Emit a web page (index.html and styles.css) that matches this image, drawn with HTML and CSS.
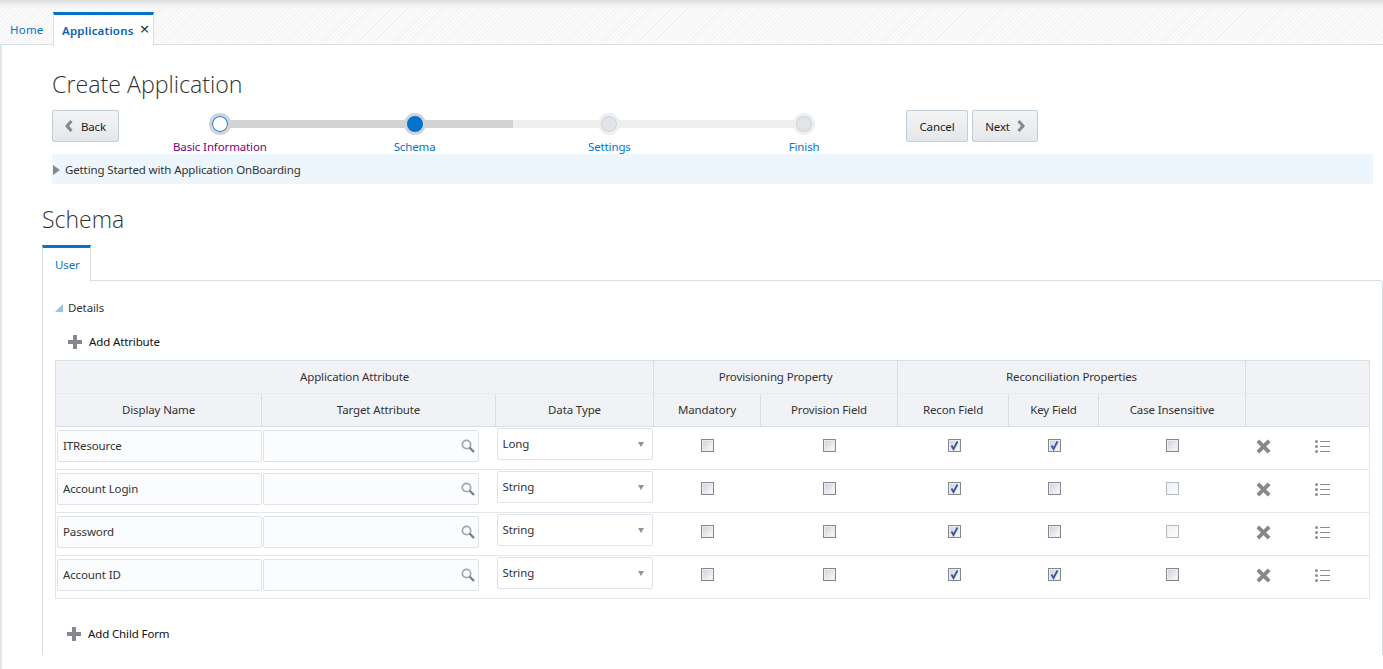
FILE: index.html
```html
<!DOCTYPE html>
<html lang="en">
<head>
<meta charset="utf-8">
<title>Create Application</title>
<link rel="stylesheet" href="styles.css">
</head>
<body>
<svg class="defs" width="0" height="0" aria-hidden="true">
  <symbol id="plus" viewBox="0 0 14 14"><path d="M5 0h4v5h5v4H9v5H5V9H0V5h5z"/></symbol>
  <symbol id="lens" viewBox="0 0 14 14"><circle cx="5.500" cy="5.500" r="4.200" fill="none" stroke="#a4a8ac" stroke-width="1.700"/><path d="M8.500 8.500l4.500 4.500" stroke="#7d8185" stroke-width="2.400"/></symbol>
  <symbol id="del" viewBox="0 0 15 15"><path d="M3.200.5L7.500 4.800 11.800.5l2.700 2.700-4.300 4.300 4.300 4.300-2.700 2.700-4.300-4.300-4.300 4.300L.5 11.800l4.300-4.300L.5 3.200z"/></symbol>
  <symbol id="list" viewBox="0 0 15 13"><g fill="#8b8f93"><circle cx="1.500" cy="1.500" r="1.500"/><circle cx="1.500" cy="6.500" r="1.500"/><circle cx="1.500" cy="11.500" r="1.500"/><rect x="5" y="1" width="10" height="1"/><rect x="5" y="6" width="10" height="1"/><rect x="5" y="11" width="10" height="1"/></g></symbol>
  <symbol id="chev" viewBox="0 0 8 12"><path d="M6.500 1L2 6l4.500 5" fill="none" stroke="#85898d" stroke-width="3"/></symbol>
  <symbol id="tick" viewBox="0 0 13 13"><path d="M3.500 6.500l2 3.500L9.500 2.500" fill="none" stroke="#3c56a5" stroke-width="1.900"/></symbol>
</svg>

<header class="topbar">
  <nav class="tabs">
    <a class="tab">Home</a>
    <a class="tab tab-active">Applications <span class="tab-close">×</span></a>
  </nav>
</header>

<main class="page">
  <section class="wizard">
    <h1 class="title">Create Application</h1>
    <div class="train-row">
      <button class="btn btn-back"><svg class="chev"><use href="#chev"/></svg>Back</button>
      <ol class="train">
        <li class="stop stop-visited"><span class="dot"></span><span class="stop-label">Basic Information</span></li>
        <li class="stop stop-current"><span class="dot"></span><span class="stop-label">Schema</span></li>
        <li class="stop"><span class="dot"></span><span class="stop-label">Settings</span></li>
        <li class="stop stop-last"><span class="dot"></span><span class="stop-label">Finish</span></li>
      </ol>
      <div class="train-actions">
        <button class="btn btn-cancel">Cancel</button>
        <button class="btn btn-next">Next<svg class="chev chev-next"><use href="#chev"/></svg></button>
      </div>
    </div>
    <div class="banner"><span class="tri-right"></span>Getting Started with Application OnBoarding</div>
  </section>

  <section class="schema">
    <h2 class="title schema-title">Schema</h2>
    <div class="subtabs"><a class="subtab">User</a></div>
    <div class="panel">
      <div class="details"><span class="tri-open"></span>Details</div>
      <div class="action action-attr"><svg class="plus"><use href="#plus"/></svg>Add Attribute</div>
      <table class="grid">
        <colgroup>
          <col class="c1"><col class="c2"><col class="c3"><col class="c4"><col class="c5"><col class="c6"><col class="c7"><col class="c8"><col class="c9"><col class="c10">
        </colgroup>
        <thead>
          <tr>
            <th colspan="3">Application Attribute</th>
            <th colspan="2">Provisioning Property</th>
            <th colspan="3">Reconciliation Properties</th>
            <th colspan="2"></th>
          </tr>
          <tr>
            <th>Display Name</th><th>Target Attribute</th><th>Data Type</th>
            <th>Mandatory</th><th>Provision Field</th>
            <th>Recon Field</th><th>Key Field</th><th>Case Insensitive</th>
            <th colspan="2"></th>
          </tr>
        </thead>
        <tbody>
          <tr>
            <td><div class="field">ITResource</div></td>
            <td><div class="field field-search"><svg class="lens"><use href="#lens"/></svg></div></td>
            <td class="td-type"><div class="select">Long<span class="caret"></span></div></td>
            <td><span class="cb"></span></td><td><span class="cb"></span></td>
            <td class="td-recon"><span class="cb"><svg><use href="#tick"/></svg></span></td>
            <td class="td-recon"><span class="cb"><svg><use href="#tick"/></svg></span></td>
            <td><span class="cb"></span></td>
            <td><svg class="del"><use href="#del"/></svg></td>
            <td><svg class="list"><use href="#list"/></svg></td>
          </tr>
          <tr>
            <td><div class="field">Account Login</div></td>
            <td><div class="field field-search"><svg class="lens"><use href="#lens"/></svg></div></td>
            <td class="td-type"><div class="select">String<span class="caret"></span></div></td>
            <td><span class="cb"></span></td><td><span class="cb"></span></td>
            <td class="td-recon"><span class="cb"><svg><use href="#tick"/></svg></span></td>
            <td class="td-recon"><span class="cb"></span></td>
            <td><span class="cb cb-off"></span></td>
            <td><svg class="del"><use href="#del"/></svg></td>
            <td><svg class="list"><use href="#list"/></svg></td>
          </tr>
          <tr>
            <td><div class="field">Password</div></td>
            <td><div class="field field-search"><svg class="lens"><use href="#lens"/></svg></div></td>
            <td class="td-type"><div class="select">String<span class="caret"></span></div></td>
            <td><span class="cb"></span></td><td><span class="cb"></span></td>
            <td class="td-recon"><span class="cb"><svg><use href="#tick"/></svg></span></td>
            <td class="td-recon"><span class="cb"></span></td>
            <td><span class="cb cb-off"></span></td>
            <td><svg class="del"><use href="#del"/></svg></td>
            <td><svg class="list"><use href="#list"/></svg></td>
          </tr>
          <tr>
            <td><div class="field">Account ID</div></td>
            <td><div class="field field-search"><svg class="lens"><use href="#lens"/></svg></div></td>
            <td class="td-type"><div class="select">String<span class="caret"></span></div></td>
            <td><span class="cb"></span></td><td><span class="cb"></span></td>
            <td class="td-recon"><span class="cb"><svg><use href="#tick"/></svg></span></td>
            <td class="td-recon"><span class="cb"><svg><use href="#tick"/></svg></span></td>
            <td><span class="cb"></span></td>
            <td><svg class="del"><use href="#del"/></svg></td>
            <td><svg class="list"><use href="#list"/></svg></td>
          </tr>
        </tbody>
      </table>
      <div class="action action-child"><svg class="plus"><use href="#plus"/></svg>Add Child Form</div>
    </div>
  </section>
</main>
</body>
</html>
```

FILE: styles.css
```css
* { box-sizing: border-box; }
html, body { height: 100%; }
body {
  margin: 0;
  height: 669px;
  overflow: hidden;
  background: #fff;
  color: #333;
  font: 11.5px/16px "Noto Sans", "Open Sans", "Liberation Sans", sans-serif;
  letter-spacing: -0.13px;
}
.defs { display: block; height: 0; }

.topbar {
  height: 45px;
  border-bottom: 1px solid #d6dfe6;
  background:
    linear-gradient(#dcdcdc, #f1f1f1 5px, rgba(255,255,255,0) 9px),
    repeating-linear-gradient(135deg, #f3f3f3 0 1px, #fbfbfb 1px 3px);
}
.tabs { display: flex; padding-top: 12px; height: 45px; align-items: stretch; }
.tab { width: 53px; padding: 10px 0 0 10px; color: #0572ce; letter-spacing: 0.2px; }
.tab-active {
  width: 101px;
  margin: 0 0 -1px 0;
  padding: 7px 0 0 8px;
  background: #fff;
  border: 1px solid #d6dfe6;
  border-top: 3px solid #0572ce;
  border-bottom: 0;
  font-weight: 600;
  color: #0a62b4;
  white-space: nowrap;
}
.tab-close { color: #333; font-weight: 400; font-size: 17px; line-height: 14px; margin-left: 3px; }

.page { height: 624px; border-left: 2px solid #e3e6ea; }

.wizard { padding: 22px 10px 0 50px; }
.title {
  margin: 0;
  font: 300 23.200px/34px "Open Sans", "Noto Sans", sans-serif;
  letter-spacing: 0;
  color: #333;
}
.train-row { display: flex; height: 44px; margin-top: 9px; }
.btn {
  height: 32px;
  padding: 2px 0 0;
  display: inline-flex;
  align-items: center;
  justify-content: center;
  border: 1px solid #c4ced7;
  border-radius: 2px;
  background: linear-gradient(#f3f4f5, #e4e7ea);
  color: #1c1c1c;
  font: inherit;
  letter-spacing: inherit;
}
.btn-back { width: 67px; }
.btn-cancel { width: 62px; }
.btn-next { width: 66px; }
.chev { width: 8px; height: 12px; margin: -2px 8px 0 0; }
.chev-next { margin: -2px 0 0 7px; transform: scaleX(-1); }

.train {
  display: grid;
  grid-template-columns: repeat(4, 194.750px);
  margin: 0 0 0 3.500px;
  padding: 0;
  list-style: none;
  height: 44px;
}
.stop {
  position: relative;
  display: flex;
  flex-direction: column;
  align-items: center;
  padding-top: 3px;
}
.stop::after {
  content: "";
  position: absolute;
  top: 10px;
  left: 50%;
  width: 100%;
  height: 8px;
  background: #efefef;
}
.stop-last::after { display: none; }
.stop-visited::after { background: #d2d3d5; }
.stop-current::after { background: linear-gradient(90deg, #d2d3d5 50.300%, #efefef 50.300%); }
.dot {
  position: relative;
  z-index: 1;
  width: 22px;
  height: 22px;
  border-radius: 50%;
  border: 3px solid #efefef;
  background: #e1e5ea;
  box-shadow: inset 0 0 0 1px #c9d2db;
}
.stop-visited .dot {
  border-color: #d2d3d5;
  background: #fff;
  box-shadow: inset 0 0 0 1px #0572ce;
}
.stop-current .dot {
  border-color: #d2d3d5;
  background: #0572ce;
  box-shadow: none;
}
.stop-label { margin-top: 4px; color: #0572ce; white-space: nowrap; }
.stop-visited .stop-label { color: #800080; }

.train-actions { display: flex; gap: 4px; margin-left: 4.500px; align-items: flex-start; }

.banner {
  height: 30px;
  padding-top: 1px;
  display: flex;
  align-items: center;
  background: #eef6fd;
  color: #333;
}
.tri-right {
  width: 0; height: 0;
  margin: 0 5px 0 1px;
  border-left: 7px solid #85898d;
  border-top: 5px solid transparent;
  border-bottom: 5px solid transparent;
}

.schema { padding: 18px 0 0 40px; }
.schema-title { font-size: 23px; }
.subtabs { display: flex; height: 36px; margin-top: 9px; }
.subtab {
  width: 49px;
  height: 37px;
  position: relative;
  z-index: 1;
  padding: 9px 0 0 12px;
  background: #fff;
  border: 1px solid #d6dfe6;
  border-top: 3px solid #0572ce;
  border-bottom: 0;
  color: #0572ce;
}
.panel {
  height: 375px;
  margin-top: -1px;
  padding: 19px 12px 0 12px;
  border: 1px solid #d6dfe6;
  border-bottom: 0;
  border-top-right-radius: 4px;
}
.details { height: 16px; display: flex; align-items: center; }
.tri-open {
  width: 0; height: 0;
  margin-right: 5px;
  border-bottom: 8px solid #9cc2e6;
  border-left: 8px solid transparent;
}
.action { display: flex; align-items: center; color: #111; height: 16px; }
.action-attr { margin: 18px 0 10px 13px; }
.action-child { margin: 27px 0 0 12px; }
.plus { width: 14px; height: 14px; margin-right: 7px; fill: #85898d; }

.grid {
  width: 1314px;
  border-collapse: collapse;
  table-layout: fixed;
  border: 1px solid #e3e7eb;
}
.c1 { width: 206px; } .c2 { width: 234px; } .c3 { width: 158px; } .c4 { width: 107px; } .c5 { width: 137px; }
.c6 { width: 111px; } .c7 { width: 90px; } .c8 { width: 147px; } .c9 { width: 35px; } .c10 { width: 89px; }
.grid th {
  height: 33px;
  padding: 0;
  background: #f0f2f6;
  border: 1px solid #d6dfe6;
  border-top-color: #e8ebef;
  font-weight: 400;
  color: #333;
}
.grid thead tr:first-child th { border-top-color: #d6dfe6; border-bottom-color: #e8ebef; }
.grid td {
  height: 43px;
  padding: 3px 0 0;
  border-top: 1px solid #e3e7eb;
  border-bottom: 1px solid #e3e7eb;
  text-align: center;
  vertical-align: top;
}
.grid .td-recon { padding-left: 2px; }
.field, .select {
  position: relative;
  height: 32px;
  background: #fbfcfe;
  border: 1px solid #dfe3e7;
  border-radius: 2px;
  text-align: left;
  padding: 7px 5px;
  color: #333;
}
.field { margin-left: 1px; }
.field-search { width: 216px; }
.grid .td-type { padding-top: 1px; }
.select { margin-left: 1px; width: 156px; background: #fff; }
.lens { position: absolute; right: 3px; top: 8px; width: 14px; height: 14px; }
.caret {
  position: absolute;
  right: 8px;
  top: 13px;
  border-top: 5px solid #8f9397;
  border-left: 3.500px solid transparent;
  border-right: 3.500px solid transparent;
}
.cb {
  display: block;
  position: relative;
  width: 13px;
  height: 13px;
  margin: 9px auto 0;
  border: 1px solid #85898d;
  background: linear-gradient(135deg, #ccd0da, #fdfdfd);
  box-shadow: inset 0 0 0 1px #eceded;
}
.cb svg { position: absolute; left: -1px; top: -1px; width: 13px; height: 13px; }
.cb-off { border-color: #b5b8bc; background: linear-gradient(135deg, #eef0f1, #fdfdfd); box-shadow: none; }
.del { display: block; width: 15px; height: 15px; margin: 9px auto 0; fill: #85898d; }
.list { display: block; width: 15px; height: 13px; margin: 10px 0 0 34px; }
```
